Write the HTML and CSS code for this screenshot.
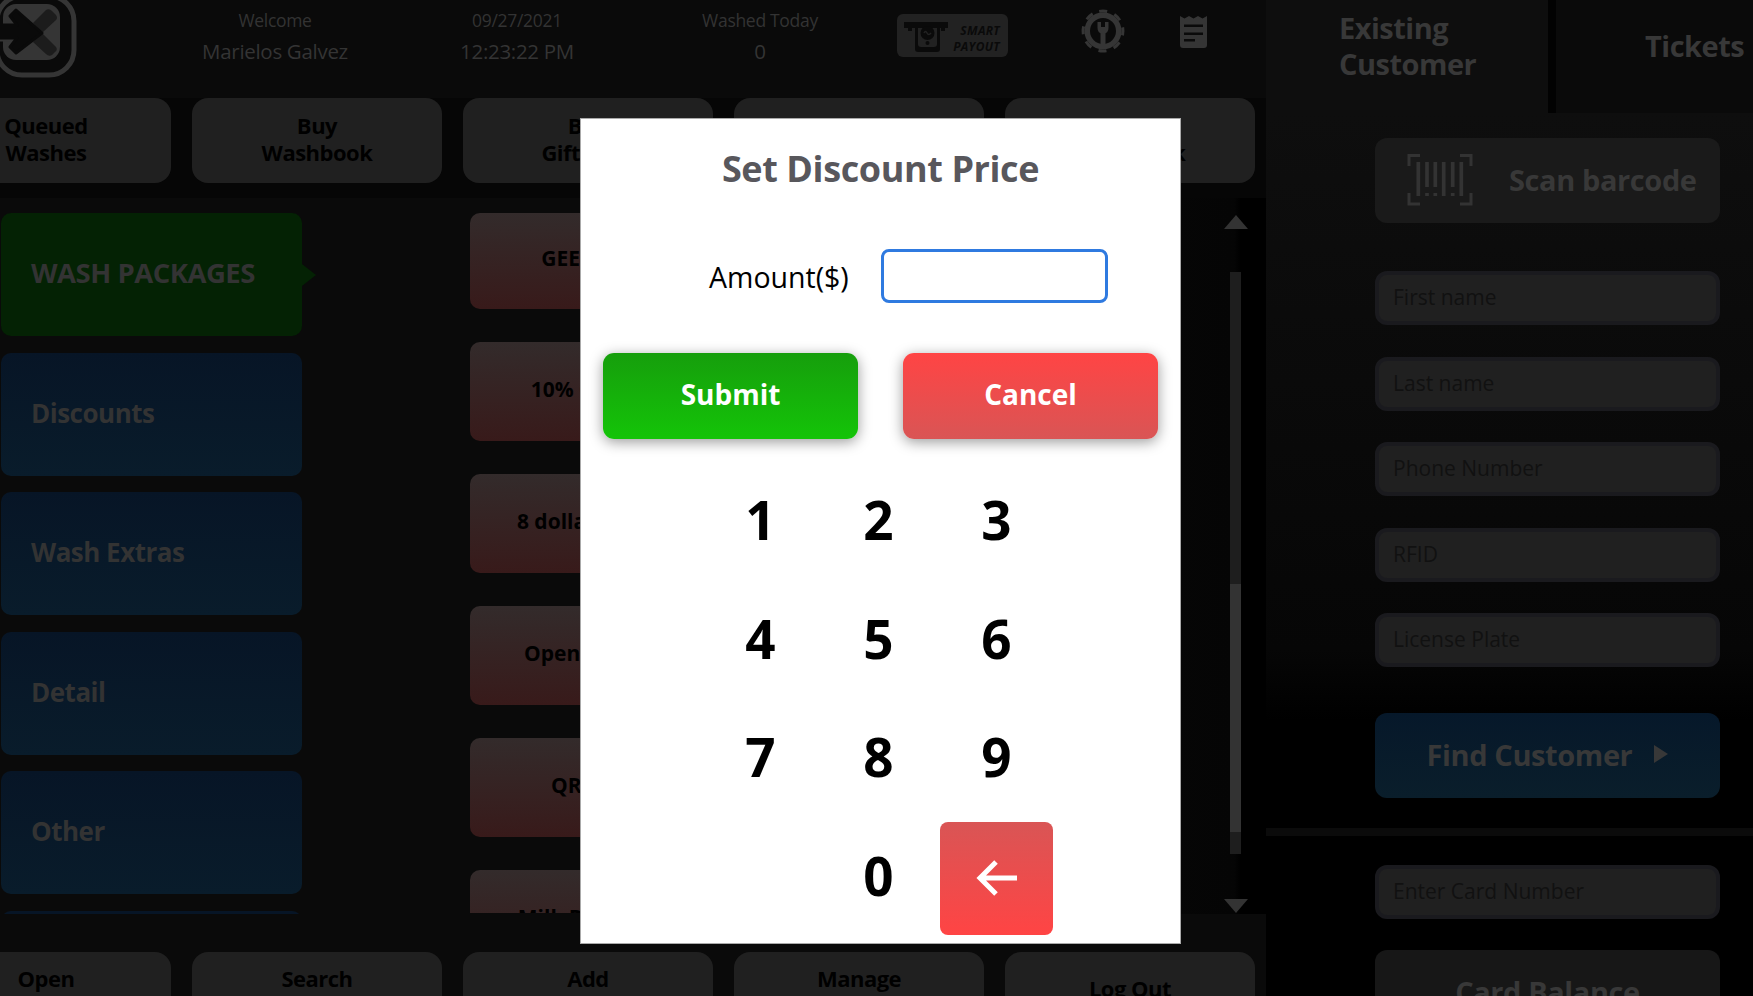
FILE: index.html
```html
<!DOCTYPE html>
<html lang="en">
<head>
  <meta charset="UTF-8" />
  <title>Set Discount Price</title>
  <link rel="stylesheet" href="styles.css">
</head>
<body>
  <div class="app">
    <div class="main">
      <header class="topbar">
        <svg class="logo" viewBox="0 0 80 80" width="80" height="80">
          <rect x="-3" y="-4" width="77" height="79" rx="25" fill="none" stroke="#353535" stroke-width="5"/>
          <rect x="3" y="4" width="57" height="56" rx="13" fill="#353535"/>
          <path d="M33 23L46 10Q49 8 52 11L56 15Q58 18 56 20L42 33Z" fill="#1c1c1c"/>
          <path d="M42 33L56 47Q58 50 55 52L52 55Q49 57 46 54L33 42Z" fill="#1c1c1c"/>
          <path d="M0 40H10" stroke="#353535" stroke-width="3"/>
          <path d="M16 10L42 33L16 53L10 47L17 38H-2V25H17L10 16Z" fill="#0a0a0a" stroke="#0a0a0a" stroke-width="3" stroke-linejoin="round"/>
        </svg>
        <div class="stat stat-user"><span>Welcome</span><strong>Marielos Galvez</strong></div>
        <div class="stat stat-date"><span>09/27/2021</span><strong>12:23:22 PM</strong></div>
        <div class="stat stat-washed"><span>Washed Today</span><strong>0</strong></div>
        <div class="payout">
          <svg viewBox="0 0 46 36" width="46" height="36">
            <path d="M0 0H44V6H0Z" fill="#0a0a0a"/>
            <path d="M4 6H8V9H4ZM37 6H41V9H37Z" fill="#0a0a0a"/>
            <path d="M11 6H36V27Q36 30 33 30H14Q11 30 11 27Z" fill="#0a0a0a"/>
            <path d="M14 6H33V22Q33 25 30 25H17Q14 25 14 22Z" fill="#222"/>
            <circle cx="23.500" cy="11" r="7" fill="#0a0a0a"/>
            <path d="M20 11Q21.500 8 23 11T27 11" fill="none" stroke="#222" stroke-width="1.500"/>
            <circle cx="23.500" cy="21" r="2" fill="#0a0a0a"/>
          </svg>
          <span class="payout-text">SMART<br>PAYOUT</span>
        </div>
        <svg class="gear" viewBox="0 0 44 44" width="44" height="44">
          <circle cx="22" cy="22" r="15.750" fill="none" stroke="#353535" stroke-width="5.500"/>
          <circle cx="22" cy="22" r="20" fill="none" stroke="#353535" stroke-width="3" stroke-dasharray="8 7.700" transform="rotate(-101 22 22)"/>
          <path d="M19.500 22H24.500V36H19.500Z" fill="#353535"/>
          <path d="M16.500 13H20V18H24V13H27.500V19Q27.500 24.500 22 24.500Q16.500 24.500 16.500 19Z" fill="#353535"/>
        </svg>
        <svg class="receipt" viewBox="0 0 27 32" width="27" height="32">
          <path d="M0 0L4.500 2.500L9 0L13.500 2.500L18 0L22.500 2.500L27 0V29Q27 32 24 32H3Q0 32 0 29Z" fill="#353535"/>
          <path d="M4 8.500H23V11H4ZM4 16.500H23V19H4ZM4 23H15V25.500H4Z" fill="#0a0a0a"/>
        </svg>
      </header>

      <div class="btn-row">
        <div class="tile">Queued<br>Washes</div>
        <div class="tile">Buy<br>Washbook</div>
        <div class="tile">Buy<br>Gift Card</div>
        <div class="tile">Sell<br>Product</div>
        <div class="tile">Open<br>Washbook</div>
      </div>

      <div class="content">
        <nav class="cats">
          <div class="cat cat-active">WASH PACKAGES</div>
          <div class="cat">Discounts</div>
          <div class="cat">Wash Extras</div>
          <div class="cat">Detail</div>
          <div class="cat">Other</div>
          <div class="cat"></div>
        </nav>
        <div class="items">
          <div class="item">GEEK Corp</div>
          <div class="item">10% Coupon</div>
          <div class="item">8 dollars credit</div>
          <div class="item">Open Coupon</div>
          <div class="item">QR Code</div>
          <div class="item">Milk Discounts</div>
        </div>
        <div class="scroller">
          <div class="arrow-up"></div>
          <div class="track"><div class="thumb"></div></div>
          <div class="arrow-down"></div>
        </div>
      </div>

      <div class="btn-row btn-row-bottom">
        <div class="tile">Open</div>
        <div class="tile">Search</div>
        <div class="tile">Add</div>
        <div class="tile">Manage</div>
        <div class="tile tile-low">Log Out</div>
      </div>
    </div>

    <aside class="side">
      <div class="tabs">
        <div class="tab tab-active">Existing<br>Customer</div>
        <div class="tab tab-other">Tickets</div>
      </div>
      <div class="side-top">
        <div class="side-btn scan">
          <svg viewBox="0 0 66 52" width="66" height="52" fill="none" stroke="#333" stroke-width="3">
            <path d="M2 12V1.500H13M53 1.500H64V12M2 39V50H13M53 50H64V39"/>
            <path d="M11.300 8V42M36.700 8V42M54.300 8V42" stroke-width="3.700"/>
            <path d="M20 8V33M28.300 8V33M45.700 8V33M20 39V42M28.300 39V42M45.700 39V42" stroke-width="3.700"/>
          </svg>
          <span>Scan barcode</span>
        </div>
        <div class="field field-first">First name</div>
        <div class="field">Last name</div>
        <div class="field">Phone Number</div>
        <div class="field">RFID</div>
        <div class="field">License Plate</div>
        <div class="side-btn find">Find Customer<i class="tri"></i></div>
      </div>
      <div class="side-bottom">
        <div class="field">Enter Card Number</div>
        <div class="side-btn balance">Card Balance</div>
      </div>
    </aside>
  </div>

  <div class="modal">
    <h1>Set Discount Price</h1>
    <div class="amount">
      <label for="amount">Amount($)</label>
      <input id="amount" type="text">
    </div>
    <div class="actions">
      <button class="submit">Submit</button>
      <button class="cancel">Cancel</button>
    </div>
    <div class="pad">
      <button>1</button><button>2</button><button>3</button>
      <button>4</button><button>5</button><button>6</button>
      <button>7</button><button>8</button><button>9</button>
      <span></span><button>0</button>
      <button class="back">
        <svg viewBox="0 0 42 40" width="42" height="40" fill="none" stroke="#fff" stroke-width="5">
          <path d="M41 20H4M20 4L4 20L20 36"/>
        </svg>
      </button>
    </div>
  </div>
</body>
</html>
```

FILE: styles.css
```css
* {
  box-sizing: border-box;
}
html, body {
  margin: 0;
  height: 100%;
  overflow: hidden;
  background-color: #000;
}
body {
  font-family: "Open Sans", "Noto Sans", sans-serif;
}
.app {
  display: flex;
  width: 1753px;
  height: 996px;
  overflow: hidden;
}
.main {
  width: 1266px;
  flex-shrink: 0;
  background-color: #0a0a0a;
  overflow: hidden;
}
.topbar {
  height: 98px;
  display: flex;
  align-items: flex-start;
}
.logo {
  flex-shrink: 0;
}
.stat {
  display: flex;
  flex-direction: column;
  align-items: center;
  color: #333;
  font-size: 17.500px;
  padding-top: 8px;
  gap: 5px;
  text-align: center;
  letter-spacing: -0.3px;
}
.stat strong {
  font-weight: 400;
  font-size: 20.500px;
  color: #343434;
}
.stat-user { width: 200px; margin-left: 95px; }
.stat-date { width: 200px; margin-left: 42px; }
.stat-washed { width: 200px; margin-left: 43px; }
.payout {
  width: 111px;
  height: 43px;
  margin: 14px 0 0 37px;
  background-color: #222;
  border-radius: 6px;
  display: flex;
  align-items: flex-start;
  padding: 8px 0 0 7px;
}
.payout-text {
  font-size: 12px;
  line-height: 16px;
  font-weight: 700;
  font-style: italic;
  color: #0a0a0a;
  text-align: right;
  flex: 1;
  padding: 1px 8px 0 0;
  letter-spacing: 0.3px;
}
.gear {
  margin: 9px 0 0 73px;
  flex-shrink: 0;
}
.receipt {
  margin: 16px 0 0 55px;
  flex-shrink: 0;
}
.btn-row {
  display: flex;
  gap: 21px;
  margin-left: -79px;
  height: 100px;
  padding-bottom: 15px;
  background-color: #060606;
}
.tile {
  width: 250px;
  flex-shrink: 0;
  height: 85px;
  background-color: #202020;
  border-radius: 16px;
  display: flex;
  align-items: center;
  justify-content: center;
  text-align: center;
  font-size: 22px;
  line-height: 27px;
  font-weight: 700;
  color: #000;
  letter-spacing: -0.5px;
  padding-bottom: 4px;
}
.content {
  height: 716px;
  padding-top: 15px;
  display: flex;
  overflow: hidden;
  background: linear-gradient(to right, #0a0a0a 70%, #050505 97.500%, #000 98%);
}
.cats {
  width: 470px;
  flex-shrink: 0;
  padding-left: 1px;
  display: flex;
  flex-direction: column;
  gap: 16.500px;
}
.cat {
  position: relative;
  width: 301px;
  height: 123px;
  flex-shrink: 0;
  border-radius: 10px;
  padding: 0 0 3px 30px;
  display: flex;
  align-items: center;
  font-size: 26px;
  font-weight: 700;
  color: #333;
  letter-spacing: -0.5px;
  background: linear-gradient(#071526, #091c2b);
}
.cat-active {
  background: #042204;
  font-size: 27.500px;
  padding-bottom: 4px;
}
.cat-active::after {
  content: "";
  position: absolute;
  left: 100%;
  top: 50%;
  margin-top: -11px;
  border-left: 14px solid #042204;
  border-top: 11px solid transparent;
  border-bottom: 11px solid transparent;
}
.items {
  width: 250px;
  flex-shrink: 0;
  height: 700px;
  overflow: hidden;
  display: flex;
  flex-direction: column;
  gap: 33px;
}
.item {
  height: 99px;
  flex-shrink: 0;
  border-radius: 10px;
  background: linear-gradient(#332b2b, #381a1a);
  display: flex;
  align-items: center;
  justify-content: center;
  font-size: 21px;
  font-weight: 700;
  color: #000;
  text-align: center;
  white-space: nowrap;
  padding-bottom: 6px;
}
.item:first-child {
  height: 96px;
}
.scroller {
  margin-left: 510px;
  width: 11px;
  flex-shrink: 0;
  display: flex;
  flex-direction: column;
  align-items: center;
}
.arrow-up, .arrow-down {
  width: 0;
  height: 0;
  flex-shrink: 0;
  border-left: 12px solid transparent;
  border-right: 12px solid transparent;
}
.arrow-up {
  margin-top: 2px;
  border-bottom: 14px solid #333;
}
.arrow-down {
  margin-top: 45px;
  border-top: 14px solid #333;
}
.track {
  margin-top: 43px;
  width: 11px;
  height: 582px;
  flex-shrink: 0;
  background-color: #1e1e1e;
  padding-top: 312px;
}
.thumb {
  height: 248px;
  background-color: #333;
}
.btn-row-bottom {
  height: 120px;
  padding-top: 38px;
  background-color: #0a0a0a;
}
.btn-row-bottom .tile {
  align-items: flex-start;
  padding: 13px 0 0;
}
.btn-row-bottom .tile-low {
  padding-top: 23px;
}
.side {
  flex: 1;
  background-color: #000;
}
.tabs {
  height: 113px;
  display: flex;
  gap: 8px;
  background-color: #020202;
}
.tab {
  font-size: 29px;
  line-height: 36px;
  font-weight: 700;
  color: #383838;
  display: flex;
  align-items: center;
  letter-spacing: -0.5px;
  padding-bottom: 21px;
}
.tab-active {
  width: 282px;
  padding-left: 73px;
  background-color: #0e0e0e;
}
.tab-other {
  flex: 1;
  padding-left: 89px;
  white-space: nowrap;
  background-color: #0a0a0a;
}
.side-top {
  height: 723px;
  padding: 25px 33px 0 109px;
  display: flex;
  flex-direction: column;
  gap: 33px;
  border-bottom: 8px solid #0b0b0b;
  background: linear-gradient(#0e0e0e, #060606 75%, #000 85%);
}
.side-bottom {
  padding: 29px 33px 0 109px;
  display: flex;
  flex-direction: column;
  gap: 32px;
}
.side-btn {
  height: 85px;
  flex-shrink: 0;
  border-radius: 12px;
  display: flex;
  align-items: center;
  font-size: 29px;
  font-weight: 700;
  color: #383838;
  letter-spacing: -0.4px;
  padding-bottom: 2px;
}
.scan {
  background-color: #1a1a1a;
  padding-left: 32px;
  gap: 36px;
}
.find {
  margin-top: 14px;
  justify-content: center;
  background: linear-gradient(#06182a, #0a1e2b);
}
.tri {
  margin-left: 22px;
  border-left: 14px solid #383838;
  border-top: 9px solid transparent;
  border-bottom: 9px solid transparent;
}
.balance {
  justify-content: center;
  background-color: #171717;
}
.field {
  height: 54px;
  flex-shrink: 0;
  margin-bottom: -1.500px;
  background-color: #202020;
  border: 4px solid #1a1a1e;
  border-radius: 12px;
  padding: 0 0 2px 14px;
  display: flex;
  align-items: center;
  font-size: 21px;
  color: #111;
}
.field-first {
  margin-top: 15px;
}
.modal {
  position: absolute;
  left: 580px;
  top: 118px;
  width: 601px;
  height: 826px;
  background-color: #fff;
  border: 1px solid #aaa;
  padding: 0 22px;
}
.modal h1 {
  margin: 23px 0 0;
  text-align: center;
  font-size: 36px;
  line-height: 54px;
  font-weight: 700;
  color: #58575c;
  letter-spacing: -0.4px;
}
.amount {
  margin-top: 53px;
  display: flex;
  align-items: center;
  padding-left: 106px;
  gap: 32px;
  font-size: 28.500px;
  color: #000;
}
.amount label {
  padding-top: 2px;
}
.amount input {
  width: 227px;
  height: 54px;
  border: 3px solid #2f7ae0;
  border-radius: 8px;
  outline: none;
}
.actions {
  margin-top: 50px;
  display: flex;
  justify-content: space-between;
}
.actions button {
  width: 255px;
  height: 86px;
  border: none;
  border-radius: 11px;
  color: #fff;
  font-family: inherit;
  font-size: 28px;
  font-weight: 700;
  box-shadow: 0 3px 14px rgba(0,0,0,0.4);
  padding-bottom: 6px;
}
.submit {
  background: linear-gradient(#169e0c, #14c408);
}
.cancel {
  background: linear-gradient(#ff4444, #d95555);
}
.pad {
  margin: 24px 0 0 101px;
  display: grid;
  grid-template-columns: repeat(3, 113px);
  column-gap: 5px;
  grid-auto-rows: 113px;
  row-gap: 5.500px;
}
.pad button {
  background: none;
  border: none;
  padding: 0;
  font-family: inherit;
  font-size: 53px;
  font-weight: 700;
  color: #000;
}
.pad .back {
  display: flex;
  align-items: center;
  justify-content: center;
  background: linear-gradient(#d95555, #ff4444);
  border-radius: 8px;
  margin: 3px 0 -3px;
}
```
